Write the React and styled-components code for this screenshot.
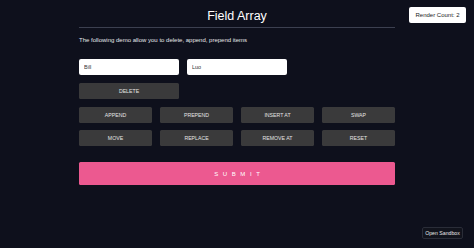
import React, { useState } from "react";
import styled, { createGlobalStyle } from "styled-components";

const GlobalStyle = createGlobalStyle`
  html, body {
    margin: 0;
    padding: 0;
    background: #0e101c;
    font-family: "Liberation Sans", Arial, sans-serif;
  }
`;

export default function App() {
  const [fields, setFields] = useState([
    { id: 1, firstName: "Bill", lastName: "Luo" },
  ]);

  const actions = [
    "Append",
    "Prepend",
    "Insert at",
    "Swap",
    "Move",
    "Replace",
    "Remove at",
    "Reset",
  ];

  return (
    <>
      <GlobalStyle />
      <Page>
        <Title>Field Array</Title>
        <Intro>The following demo allow you to delete, append, prepend items</Intro>

        {fields.map((field) => (
          <Item key={field.id}>
            <InputRow>
              <Input defaultValue={field.firstName} />
              <Input defaultValue={field.lastName} />
            </InputRow>
            <DeleteButton type="button">Delete</DeleteButton>
          </Item>
        ))}

        <ActionGrid>
          {actions.map((label) => (
            <ActionButton key={label} type="button">
              {label}
            </ActionButton>
          ))}
        </ActionGrid>

        <Submit type="submit">Submit</Submit>
      </Page>

      <RenderCount>Render Count: 2</RenderCount>
      <SandboxLink>Open Sandbox</SandboxLink>
    </>
  );
}

const Page = styled.div`
  width: 316px;
  margin: 0 auto;
  display: flex;
  flex-direction: column;
`;

const Title = styled.h1`
  margin: 0;
  padding: 8px 0 3px;
  line-height: 16px;
  font-size: 12.5px;
  font-weight: 400;
  color: #ffffff;
  text-align: center;
  border-bottom: 1px solid #3c4050;
`;

const Intro = styled.p`
  margin: 8px 0 15px;
  font-size: 6px;
  line-height: 8px;
  color: #e6e6ea;
`;

const Item = styled.div`
  display: flex;
  flex-direction: column;
  gap: 8px;
`;

const InputRow = styled.div`
  display: flex;
  gap: 8px;
`;

const Input = styled.input`
  box-sizing: border-box;
  width: 100px;
  height: 16px;
  padding: 0 5px;
  border: none;
  border-radius: 2px;
  background: #ffffff;
  color: #333;
  font-family: inherit;
  font-size: 5.5px;
  outline: none;
`;

const ButtonBase = styled.button`
  box-sizing: border-box;
  height: 16px;
  padding: 0;
  border: none;
  border-radius: 1.5px;
  background: #3a3a3b;
  color: #e4e4e4;
  font-family: inherit;
  font-size: 5.2px;
  text-transform: uppercase;
  cursor: pointer;
`;

const DeleteButton = styled(ButtonBase)`
  width: 100px;
`;

const ActionGrid = styled.div`
  margin-top: 8px;
  display: grid;
  grid-template-columns: repeat(4, 1fr);
  column-gap: 8px;
  row-gap: 7px;
`;

const ActionButton = styled(ButtonBase)``;

const Submit = styled.button`
  margin-top: 16px;
  height: 23px;
  border: none;
  border-radius: 1.5px;
  background: #ec5990;
  color: #ffffff;
  font-family: inherit;
  font-size: 6px;
  letter-spacing: 4.6px;
  text-transform: uppercase;
  padding: 0 0 0 4.6px;
`;

const RenderCount = styled.div`
  position: absolute;
  top: 7px;
  right: 8px;
  width: 57px;
  height: 16px;
  box-sizing: border-box;
  display: flex;
  align-items: center;
  justify-content: center;
  background: #ffffff;
  border-radius: 2px;
  color: #222;
  font-size: 6px;
`;

const SandboxLink = styled.div`
  position: fixed;
  right: 11px;
  bottom: 9px;
  width: 41px;
  height: 12px;
  box-sizing: border-box;
  display: flex;
  align-items: center;
  justify-content: center;
  background: #11131c;
  border: 1px solid #2a2d38;
  border-radius: 2px;
  color: #e8e8e8;
  font-size: 5.2px;
`;
